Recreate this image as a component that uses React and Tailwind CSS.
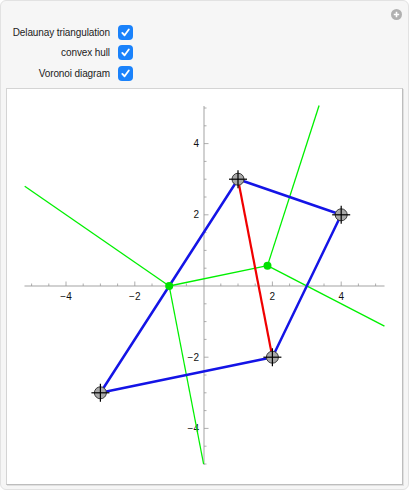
import React from 'react';

const X = (x) => 203.6 + 34.4 * x;
const Y = (y) => 286 - 35.6 * y;

const pts = [[1, 3], [4, 2], [2, -2], [-3, -3]];
const v1 = [-1, 0];
const v2 = [13 / 7, 4 / 7];

function Check({ label }) {
    return (
        <div className="flex items-center justify-end h-[20.5px] whitespace-nowrap">
            <span className="text-[10px] tracking-[-0.1px] text-[#222] mr-[8px]">{label}</span>
            <div className="shrink-0 w-[15px] h-[15px] rounded-[4px] bg-[#1a82fb] flex items-center justify-center">
                <svg width="11" height="11" viewBox="0 0 12 12">
                    <path d="M2.5 6.4 L5 9 L9.6 2.8" fill="none" stroke="white" strokeWidth="2" strokeLinecap="round" strokeLinejoin="round" />
                </svg>
            </div>
        </div>
    );
}

function Locator({ p }) {
    const cx = X(p[0]);
    const cy = Y(p[1]);
    return (
        <g>
            <circle cx={cx} cy={cy} r="6" fill="#a8a8a8" stroke="#3a3a3a" strokeWidth="1" />
            <line x1={cx - 9} y1={cy} x2={cx + 9} y2={cy} stroke="#000" strokeWidth="1.2" />
            <line x1={cx} y1={cy - 9} x2={cx} y2={cy + 9} stroke="#000" strokeWidth="1.2" />
        </g>
    );
}

function Plot() {
    const xTicks = [];
    for (let i = -10; i <= 10; i++) {
        if (i === 0) continue;
        const v = i / 2;
        const major = i % 4 === 0;
        xTicks.push(<line key={'x' + i} x1={X(v)} x2={X(v)} y1={286} y2={major ? 281.5 : 283.5} stroke="#999" strokeWidth="0.8" />);
    }
    const yTicks = [];
    for (let i = -10; i <= 10; i++) {
        if (i === 0) continue;
        const v = i / 2;
        const major = i % 4 === 0;
        yTicks.push(<line key={'y' + i} y1={Y(v)} y2={Y(v)} x1={204} x2={major ? 208.5 : 206.5} stroke="#999" strokeWidth="0.8" />);
    }
    const font = { fontFamily: '"Liberation Sans", Arial, sans-serif', fontSize: 10, fill: '#111' };
    return (
        <svg width="395" height="394" viewBox="7 89 395 394" className="block">
            {/* axes */}
            <line x1={24.5} x2={384.5} y1={286} y2={286} stroke="#999" strokeWidth="0.9" />
            <line x1={204} x2={204} y1={106} y2={465} stroke="#999" strokeWidth="0.9" />
            {xTicks}
            {yTicks}
            {[-4, -2, 2, 4].map((v) => (
                <text key={'lx' + v} x={X(v)} y={300} textAnchor="middle" style={font}>{v < 0 ? '\u2212' + -v : v}</text>
            ))}
            {[-4, -2, 2, 4].map((v) => (
                <text key={'ly' + v} x={199} y={Y(v) + 3.5} textAnchor="end" style={font}>{v < 0 ? '\u2212' + -v : v}</text>
            ))}

            {/* voronoi */}
            <g stroke="#00f000" strokeWidth="1.3" fill="none">
                <line x1={X(v1[0])} y1={Y(v1[1])} x2={X(v2[0])} y2={Y(v2[1])} />
                <line x1={X(v1[0])} y1={Y(v1[1])} x2={X(-5.2)} y2={Y(2.8)} />
                <line x1={X(v1[0])} y1={Y(v1[1])} x2={X(0)} y2={Y(-5)} />
                <line x1={X(v2[0])} y1={Y(v2[1])} x2={X(v2[0] + 1.5)} y2={Y(v2[1] + 4.5)} />
                <line x1={X(v2[0])} y1={Y(v2[1])} x2={X(v2[0] + 3.4)} y2={Y(v2[1] - 1.7)} />
            </g>

            {/* delaunay diagonal */}
            <line x1={X(1)} y1={Y(3)} x2={X(2)} y2={Y(-2)} stroke="#f00000" strokeWidth="2.2" />

            {/* convex hull */}
            <polygon
                points={[[-3, -3], [1, 3], [4, 2], [2, -2]].map((p) => `${X(p[0])},${Y(p[1])}`).join(' ')}
                fill="none" stroke="#1414e6" strokeWidth="2.5" strokeLinejoin="round"
            />

            <circle cx={X(v1[0])} cy={Y(v1[1])} r="4" fill="#00e000" />
            <circle cx={X(v2[0])} cy={Y(v2[1])} r="4" fill="#00e000" />

            {pts.map((p, i) => <Locator key={i} p={p} />)}
        </svg>
    );
}

export default function App() {
    return (
        <div className="w-[410px] h-[491px] bg-white" style={{ fontFamily: '"Liberation Sans", Arial, sans-serif' }}>
            <div className="relative w-[409px] h-[490px] bg-[#f6f6f6] border border-[#e2e2e2] rounded-[6px] pt-[21px] px-[5px]">
                <div className="absolute top-[8px] right-[6px] w-[11px] h-[11px] rounded-full bg-[#b0b0b0] flex items-center justify-center">
                    <svg width="7" height="7" viewBox="0 0 7 7">
                        <path d="M3.5 0.8 V6.2 M0.8 3.5 H6.2" stroke="white" strokeWidth="1.6" />
                    </svg>
                </div>
                <div className="w-[127px] flex flex-col">
                    <Check label="Delaunay triangulation" />
                    <Check label="convex hull" />
                    <Check label="Voronoi diagram" />
                </div>
                <div className="mt-[4px] w-[397px] h-[397px] bg-white border border-[#d4d4d4] border-r-[#bdbdbd] border-b-[#bdbdbd] shadow-[1px_1px_0_#e0e0e0]">
                    <Plot />
                </div>
            </div>
        </div>
    );
}
